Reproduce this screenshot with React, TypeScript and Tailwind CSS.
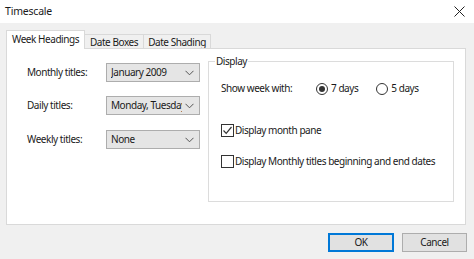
import React from "react";

function Combo({ value }: { value: string }) {
  return (
    <div className="flex h-[19px] w-[94px] items-center border border-[#adadad] bg-[#e5e5e5] pl-[4px] pr-[5px]">
      <span className="flex-1 overflow-hidden whitespace-nowrap">{value}</span>
      <svg width="9" height="6" viewBox="0 0 9 6" className="ml-[3px] shrink-0">
        <path d="M0.5 0.8 L4.5 4.8 L8.5 0.8" fill="none" stroke="#555" strokeWidth="1" />
      </svg>
    </div>
  );
}

function Radio({ checked, label }: { checked?: boolean; label: string }) {
  return (
    <div className="flex items-center gap-[3px]">
      <span className="flex h-[12px] w-[12px] items-center justify-center rounded-full border border-[#333] bg-white">
        {checked && <span className="h-[6px] w-[6px] rounded-full bg-[#333]" />}
      </span>
      <span>{label}</span>
    </div>
  );
}

function Check({ checked, label }: { checked?: boolean; label: string }) {
  return (
    <div className="flex items-center gap-[1px] whitespace-nowrap">
      <span className="flex h-[13px] w-[13px] items-center justify-center border border-[#333] bg-white">
        {checked && (
          <svg width="11" height="11" viewBox="0 0 11 11">
            <path d="M1.5 5.5 L4.2 8.3 L9.5 2" fill="none" stroke="#333" strokeWidth="1.2" />
          </svg>
        )}
      </span>
      <span>{label}</span>
    </div>
  );
}

export default function App() {
  return (
    <div
      className="flex h-[259px] w-[474px] flex-col bg-[#f0f0f0] text-[10px] tracking-[-0.45px] text-[#1a1a1a]"
      style={{ fontFamily: '"Noto Sans", "Open Sans", sans-serif' }}
    >
      {/* title bar */}
      <div className="flex h-[23px] items-center justify-between bg-white pl-[5px] pr-[9px]">
        <span className="text-[10.5px] tracking-[-0.2px]">Timescale</span>
        <svg width="11" height="11" viewBox="0 0 11 11">
          <path d="M0.5 0.5 L10.5 10.5 M10.5 0.5 L0.5 10.5" stroke="#222" strokeWidth="1" />
        </svg>
      </div>

      {/* tabs */}
      <div className="flex items-end whitespace-nowrap pl-[6px] pt-[7px]">
        <div className="relative z-10 -mb-px flex h-[19px] w-[79px] items-center justify-center border border-b-0 border-[#d9d9d9] bg-white pb-[2px]">
          Week Headings
        </div>
        <div className="flex h-[14px] w-[59px] items-center justify-center border border-l-0 border-b-0 border-[#d9d9d9] pt-[1px]">
          Date Boxes
        </div>
        <div className="flex h-[14px] w-[67px] items-center justify-center border border-l-0 border-b-0 border-[#d9d9d9] pt-[1px]">
          Date Shading
        </div>
      </div>

      {/* panel */}
      <div className="ml-[6px] flex h-[177px] w-[460px] border border-[#d9d9d9] bg-white">
        <div className="flex w-[201px] flex-col pl-[20px] pt-[14px]">
          <div className="flex items-center">
            <span className="w-[79px]">Monthly titles:</span>
            <Combo value="January 2009" />
          </div>
          <div className="mt-[14px] flex items-center">
            <span className="w-[79px]">Daily titles:</span>
            <Combo value="Monday, Tuesday" />
          </div>
          <div className="mt-[15px] flex items-center">
            <span className="w-[79px]">Weekly titles:</span>
            <Combo value="None" />
          </div>
        </div>

        <fieldset className="mt-[5px] h-[148px] w-[246px] border border-[#dcdcdc] px-[12px]">
          <legend className="ml-[-6px] px-[1px] leading-[14px]">Display</legend>
          <div className="mt-[13px] flex items-center">
            <span className="w-[95px]">Show week with:</span>
            <Radio checked label="7 days" />
            <div className="ml-[18px]">
              <Radio label="5 days" />
            </div>
          </div>
          <div className="mt-[27px]">
            <Check checked label="Display month pane" />
          </div>
          <div className="mt-[16px]">
            <Check label="Display Monthly titles beginning and end dates" />
          </div>
        </fieldset>
      </div>

      {/* buttons */}
      <div className="flex justify-end gap-[8px] pr-[7px] pt-[8px]">
        <button className="h-[19px] w-[66px] border-2 border-[#0078d7] bg-[#e1e1e1]">OK</button>
        <button className="h-[19px] w-[65px] border border-[#adadad] bg-[#e1e1e1]">Cancel</button>
      </div>
    </div>
  );
}
